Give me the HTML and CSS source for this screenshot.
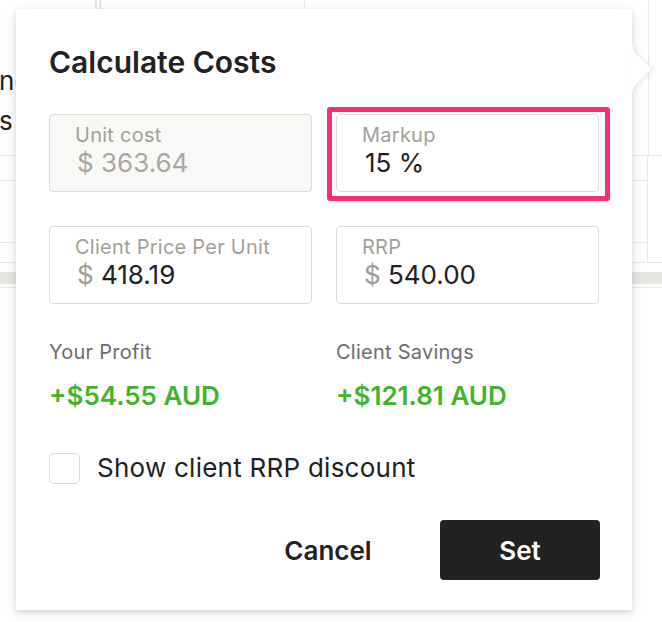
FILE: index.html
```html
<!DOCTYPE html>
<html lang="en">
<head>
<meta charset="utf-8">
<title>Calculate Costs</title>
<link rel="stylesheet" href="styles.css">
</head>
<body>
<div class="page">
  <div class="bg">
    <div class="bg-top">
      <div class="bg-c1">
        <p class="bg-text bg-t1">ne</p>
        <p class="bg-text bg-t2">s</p>
      </div>
      <div class="bg-div"></div>
      <div class="bg-c2"></div>
      <div class="bg-c3"></div>
      <div class="bg-c4"></div>
    </div>
    <div class="bg-mid">
      <div class="bg-mid-main">
        <div class="bg-line-a"></div>
        <div class="bg-line-b"></div>
      </div>
      <div class="bg-mid-side"></div>
    </div>
    <div class="bg-gap"></div>
    <div class="bg-bar"></div>
    <div class="bg-foot"></div>
  </div>

  <div class="popover">
    <svg class="arrow" width="24" height="46" viewBox="0 0 24 46" aria-hidden="true">
      <polygon points="0,2 21,23 0,44" fill="#ffffff" stroke="#ebebeb" stroke-width="1"/>
      <rect x="0" y="0" width="2" height="46" fill="#ffffff"/>
    </svg>
    <h1 class="title">Calculate Costs</h1>

    <div class="fields">
      <div class="field disabled">
        <span class="field-label">Unit cost</span>
        <span class="field-value"><span class="cur">$</span> 363.64</span>
      </div>
      <div class="field focused">
        <span class="field-label">Markup</span>
        <span class="field-value markup">15 %</span>
        <span class="ring"></span>
      </div>
      <div class="field">
        <span class="field-label">Client Price Per Unit</span>
        <span class="field-value"><span class="cur">$</span> 418.19</span>
      </div>
      <div class="field">
        <span class="field-label">RRP</span>
        <span class="field-value"><span class="cur">$</span> 540.00</span>
      </div>
    </div>

    <div class="stats">
      <div class="stat">
        <span class="stat-label">Your Profit</span>
        <span class="stat-value">+$54.55 AUD</span>
      </div>
      <div class="stat">
        <span class="stat-label">Client Savings</span>
        <span class="stat-value">+$121.81 AUD</span>
      </div>
    </div>

    <label class="check">
      <span class="box"></span>
      <span class="check-text">Show client RRP discount</span>
    </label>

    <div class="actions">
      <button class="btn btn-cancel" type="button">Cancel</button>
      <button class="btn btn-set" type="button">Set</button>
    </div>
  </div>
</div>
</body>
</html>
```

FILE: styles.css
```css
* { box-sizing: border-box; }

html, body {
  margin: 0;
  padding: 0;
  background: #ffffff;
}

body {
  font-family: "Inter", "Noto Sans", sans-serif;
  color: #222222;
}

.page {
  position: relative;
  width: 662px;
  height: 622px;
  overflow: hidden;
  background: #ffffff;
}

/* ---------- background page ---------- */
.bg {
  display: flex;
  flex-direction: column;
}

.bg-top {
  display: grid;
  grid-template-columns: 95px 6px 204px 344px 1fr;
  height: 156px;
  border-bottom: 1px solid #ebe9e4;
}

.bg-c1 {
  padding-top: 64px;
}

.bg-text {
  margin: 0 0 0 -1px;
  font-size: 26px;
  line-height: 34px;
  letter-spacing: 0.25px;
  color: #222222;
  height: 40px;
}

.bg-div {
  border-left: 2px solid #e4e2dd;
  border-right: 2px solid #e4e2dd;
}

.bg-c2 { border-right: 1px solid #ebe9e4; }
.bg-c3 { border-right: 1px solid #ebe9e4; }

.bg-mid {
  display: grid;
  grid-template-columns: 648px 1fr;
  height: 107px;
  border-bottom: 1px solid #ebe9e4;
}

.bg-mid-main {
  border-right: 1px solid #ebe9e4;
  display: flex;
  flex-direction: column;
}

.bg-line-a {
  height: 25px;
  border-bottom: 1px solid #ebe9e4;
}

.bg-line-b {
  height: 62px;
  border-bottom: 1px solid #ebe9e4;
}

.bg-gap { height: 9px; }

.bg-bar {
  height: 12px;
  background: #e9e7e1;
}

.bg-foot {
  height: 4px;
  border-bottom: 1px solid #eeece8;
}

/* ---------- popover ---------- */
.popover {
  position: absolute;
  left: 16px;
  top: 9px;
  width: 616px;
  height: 601px;
  background: #ffffff;
  box-shadow: 0 2px 4px rgba(0, 0, 0, 0.08), 0 3px 12px rgba(0, 0, 0, 0.12);
  padding: 36px 33px 30px;
  display: flex;
  flex-direction: column;
}

.arrow {
  position: absolute;
  left: 615px;
  top: 37px;
  filter: drop-shadow(2px 1px 2px rgba(0, 0, 0, 0.06));
}

.title {
  margin: 0;
  font-size: 30px;
  line-height: 34px;
  font-weight: 600;
  letter-spacing: 0;
  color: #222222;
}

.fields {
  margin-top: 35px;
  display: grid;
  grid-template-columns: 263px 263px;
  grid-auto-rows: 78px;
  column-gap: 24px;
  row-gap: 34px;
}

.field {
  position: relative;
  border: 1px solid #dedbd3;
  border-radius: 4px;
  background: #ffffff;
  padding: 8px 0 0 25px;
  display: flex;
  flex-direction: column;
}

.field.disabled {
  background: #f8f8f7;
}

.field-label {
  font-size: 20px;
  line-height: 24px;
  color: #a29f98;
  letter-spacing: 0.25px;
}

.field-value {
  margin-top: 1px;
  font-size: 26px;
  line-height: 30px;
  color: #222222;
  letter-spacing: 0;
  padding-left: 2px;
}

.field-value .cur {
  color: #9f9c95;
}

.field.disabled .field-value,
.field.disabled .field-value .cur {
  color: #aaa7a0;
}

.field-value.markup {
  padding-left: 3px;
}

.ring {
  position: absolute;
  left: -10px;
  right: -12px;
  top: -8px;
  bottom: -10px;
  border: 5px solid #f8306f;
  border-radius: 3px;
  pointer-events: none;
}

.stats {
  margin-top: 36px;
  display: grid;
  grid-template-columns: 263px 263px;
  column-gap: 24px;
}

.stat {
  display: flex;
  flex-direction: column;
}

.stat-label {
  font-size: 20px;
  line-height: 24px;
  color: #6d6d6d;
  letter-spacing: 0.25px;
}

.stat-value {
  margin-top: 17px;
  font-size: 26px;
  line-height: 30px;
  font-weight: 600;
  color: #42b42c;
  letter-spacing: 0;
}

.check {
  margin-top: 41px;
  display: flex;
  align-items: center;
  gap: 17px;
  height: 32px;
}

.box {
  width: 31px;
  height: 31px;
  border: 1.5px solid #dcd9d1;
  border-radius: 5px;
  background: #ffffff;
  flex: none;
}

.check-text {
  font-size: 26px;
  line-height: 30px;
  color: #222222;
  letter-spacing: 0.25px;
}

.actions {
  margin-top: 36px;
  display: flex;
  justify-content: flex-end;
  gap: 32px;
}

.btn {
  width: 160px;
  height: 60px;
  border: none;
  border-radius: 4px;
  font-family: "Inter", "Noto Sans", sans-serif;
  font-size: 26px;
  font-weight: 600;
  letter-spacing: 0;
  cursor: pointer;
}

.btn-cancel {
  background: transparent;
  color: #222222;
}

.btn-set {
  background: #222222;
  color: #ffffff;
  margin-right: -1px;
}
```
